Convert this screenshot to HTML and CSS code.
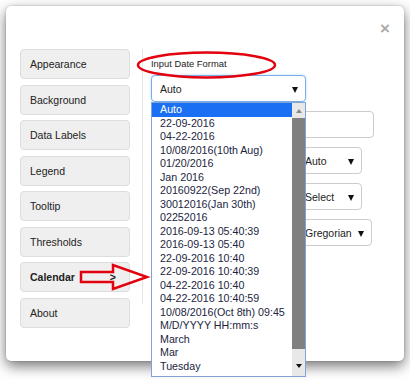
FILE: index.html
```html
<!DOCTYPE html>
<html lang="en">

<head>
    <meta charset="utf-8" />
    <title>Chart settings - Calendar</title>
    <link rel="stylesheet" href="styles.css">
</head>

<body>
    <div class="modal">
        <div class="modal-header">
            <button class="close" aria-label="Close">&times;</button>
        </div>
        <div class="modal-body">
            <nav class="tabs">
                <button class="tab">Appearance</button>
                <button class="tab">Background</button>
                <button class="tab">Data Labels</button>
                <button class="tab">Legend</button>
                <button class="tab">Tooltip</button>
                <button class="tab">Thresholds</button>
                <button class="tab active">Calendar <span>&gt;</span></button>
                <button class="tab">About</button>
            </nav>
            <div class="divider"></div>

            <section class="pane">
                <label class="field-label">Input Date Format</label>
                <div class="select-wrap">
                    <div class="select focused">Auto<i class="caret"></i></div>
                    <ul class="options">
                        <li class="selected">Auto</li>
                        <li>22-09-2016</li>
                        <li>04-22-2016</li>
                        <li>10/08/2016(10th Aug)</li>
                        <li>01/20/2016</li>
                        <li>Jan 2016</li>
                        <li>20160922(Sep 22nd)</li>
                        <li>30012016(Jan 30th)</li>
                        <li>02252016</li>
                        <li>2016-09-13 05:40:39</li>
                        <li>2016-09-13 05:40</li>
                        <li>22-09-2016 10:40</li>
                        <li>22-09-2016 10:40:39</li>
                        <li>04-22-2016 10:40</li>
                        <li>04-22-2016 10:40:59</li>
                        <li>10/08/2016(Oct 8th) 09:45</li>
                        <li>M/D/YYYY HH:mm:s</li>
                        <li>March</li>
                        <li>Mar</li>
                        <li>Tuesday</li>
                    </ul>
                    <div class="scrollbar">
                        <span class="sb-up"></span>
                        <span class="sb-thumb"></span>
                        <span class="sb-down"></span>
                    </div>
                </div>

                <div class="row">
                    <input class="text-input" type="text" />
                </div>
                <div class="row">
                    <div class="select small">Auto<i class="caret"></i></div>
                </div>
                <div class="row">
                    <div class="select small">Select<i class="caret"></i></div>
                </div>
                <div class="row">
                    <div class="select wide">Gregorian<i class="caret"></i></div>
                </div>
            </section>
        </div>
    </div>

    <!-- red annotations drawn over the screenshot -->
    <svg class="annotations" width="410" height="381" viewBox="0 0 410 381">
        <ellipse cx="206.5" cy="65" rx="68.5" ry="12.5" fill="none" stroke="#e3000f" stroke-width="2.5" />
        <polygon points="81,272 113,272 113,265 147,277 113,289 113,282 81,282" fill="none" stroke="#e3000f"
            stroke-width="2.5" stroke-linejoin="miter" />
    </svg>
</body>

</html>
```

FILE: styles.css
```css
:root {
    --text-color: #222;
    --list-text: #1c2541;
    --border-color: #ddd;
    --tab-bg: #efefef;
    --focus-border: #7aaee8;
    --highlight: #1a6ff2;
}

html,
body {
    margin: 0;
    background: #fff;
}

body {
    font-family: "Liberation Sans", Arial, sans-serif;
    color: var(--text-color);
    width: 410px;
    height: 381px;
    overflow: hidden;
}

.modal {
    margin: 6px;
    width: 398px;
    height: 355px;
    background: #fff;
    border-radius: 5px;
    box-shadow: 0 5px 14px rgba(0, 0, 0, 0.55), 0 0 2px rgba(0, 0, 0, 0.25);
}

.modal-header {
    height: 43px;
    box-sizing: border-box;
    display: flex;
    justify-content: flex-end;
    align-items: flex-start;
    padding: 14px 14px 0 0;
}

.close {
    border: 0;
    background: none;
    padding: 0;
    font-family: inherit;
    font-size: 17px;
    font-weight: 700;
    line-height: 18px;
    color: #aaa;
}

.modal-body {
    display: flex;
    align-items: flex-start;
    padding-left: 14px;
}

.tabs {
    width: 110px;
    flex-shrink: 0;
    display: flex;
    flex-direction: column;
    gap: 5.5px;
}

.tab {
    flex-shrink: 0;
    box-sizing: border-box;
    height: 30px;
    display: flex;
    align-items: center;
    justify-content: space-between;
    padding: 0 13px 0 9px;
    background: var(--tab-bg);
    border: 1px solid var(--border-color);
    border-radius: 4px;
    font-family: inherit;
    font-size: 10.5px;
    color: var(--text-color);
    text-align: left;
}

.tab.active {
    font-weight: 700;
}

.divider {
    width: 1px;
    height: 255px;
    margin-left: 12px;
    background: #e6e6e6;
}

.pane {
    padding: 9px 0 0 8px;
    flex: 1;
}

.field-label {
    display: block;
    font-size: 9.4px;
    line-height: 12px;
    color: #222;
    margin-bottom: 5px;
}

.select-wrap {
    position: relative;
    width: 155px;
}

.select {
    position: relative;
    box-sizing: border-box;
    height: 27px;
    display: flex;
    align-items: center;
    padding-left: 8px;
    border: 1px solid #ccc;
    border-radius: 4px;
    background: #fff;
    font-size: 10.5px;
    color: #222;
}

.select.focused {
    border-color: var(--focus-border);
    box-shadow: 0 0 3px rgba(102, 175, 233, 0.45);
}

.caret {
    position: absolute;
    right: 7px;
    top: 11px;
    width: 0;
    height: 0;
    border-left: 3.5px solid transparent;
    border-right: 3.5px solid transparent;
    border-top: 6px solid #111;
}

.options {
    position: absolute;
    top: 100%;
    left: 0;
    z-index: 2;
    box-sizing: border-box;
    width: 155px;
    height: 275px;
    margin: 0;
    padding: 0;
    list-style: none;
    background: #fff;
    border: 1px solid #7ea3d4;
    overflow: hidden;
}

.options li {
    padding-left: 8px;
    font-size: 10.7px;
    line-height: 13.5px;
    color: var(--list-text);
    white-space: nowrap;
}

.options li.selected {
    background: var(--highlight);
    color: #fff;
}

.scrollbar {
    position: absolute;
    z-index: 3;
    top: calc(100% + 1px);
    right: 1px;
    width: 13px;
    height: 273px;
    background: #e8e8e8;
    display: flex;
    flex-direction: column;
    align-items: center;
}

.sb-up {
    margin: 6px 0 5px;
    width: 0;
    height: 0;
    border-left: 3.5px solid transparent;
    border-right: 3.5px solid transparent;
    border-bottom: 4px solid #888;
}

.sb-thumb {
    width: 13px;
    height: 231px;
    background: #808080;
}

.sb-down {
    margin-top: 15px;
    width: 0;
    height: 0;
    border-left: 3.5px solid transparent;
    border-right: 3.5px solid transparent;
    border-top: 4px solid #111;
}

.row {
    display: flex;
    align-items: center;
    height: 27px;
    margin-top: 9px;
    padding-left: 145px;
}

.text-input {
    box-sizing: border-box;
    width: 78px;
    height: 27px;
    margin: 0;
    border: 1px solid #ccc;
    border-radius: 4px;
}

.select.small {
    width: 66px;
}

.select.wide {
    width: 76px;
}

.annotations {
    position: absolute;
    top: 0;
    left: 0;
    z-index: 5;
    pointer-events: none;
}
```
